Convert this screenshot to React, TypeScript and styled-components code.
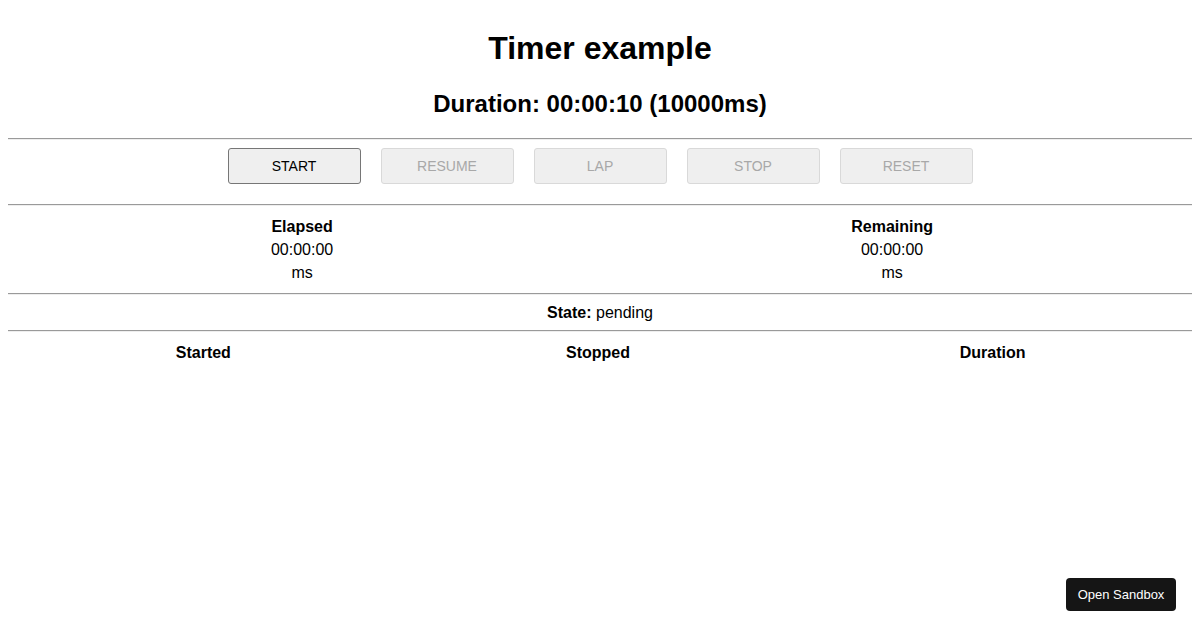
import React from "react";
import styled, { createGlobalStyle } from "styled-components";

const Global = createGlobalStyle`
  body {
    margin: 8px;
    font-family: "Liberation Sans", Arial, sans-serif;
    color: #000;
    background: #fff;
  }
`;

const Title = styled.h1`
  font-size: 32px;
  font-weight: bold;
  text-align: center;
  margin: 22px 0;
`;

const Subtitle = styled.h2`
  font-size: 24px;
  font-weight: bold;
  text-align: center;
  margin: 23px 0 20px;
`;

const Rule = styled.hr`
  margin: 0;
  border: none;
  border-top: 1px solid #9a9a9a;
  border-bottom: 1px solid #eeeeee;
  height: 0;
`;

const Controls = styled.div`
  display: flex;
  justify-content: center;
  gap: 20px;
  padding: 8px 0 20px;
`;

const Button = styled.button<{ $disabled?: boolean }>`
  width: 133px;
  height: 36px;
  font-family: "Liberation Sans", Arial, sans-serif;
  font-size: 14px;
  border-radius: 3px;
  background: #efefef;
  border: 1px solid ${(p) => (p.$disabled ? "#d9d9d9" : "#767676")};
  color: ${(p) => (p.$disabled ? "#a8a8a8" : "#000")};
  padding: 0;
`;

const Stats = styled.div`
  display: flex;
  justify-content: space-around;
  padding: 9px 0 9px 4px;
`;

const Stat = styled.div`
  text-align: center;
  font-size: 16px;
  line-height: 23px;
`;

const Label = styled.div`
  font-weight: bold;
`;

const StateLine = styled.div`
  text-align: center;
  font-size: 16px;
  line-height: 23px;
  padding: 6px 0 6px;
`;

const LapTable = styled.table`
  width: 100%;
  table-layout: fixed;
  border-collapse: collapse;
  margin-top: 11px;
  th {
    font-size: 16px;
    font-weight: bold;
    text-align: center;
    padding: 1px 4px 1px 0;
  }
`;

const SandboxLink = styled.a`
  position: fixed;
  right: 24px;
  bottom: 19px;
  width: 110px;
  height: 33px;
  display: flex;
  align-items: center;
  justify-content: center;
  background: #151515;
  color: #fff;
  border-radius: 4px;
  font-family: "Liberation Sans", Arial, sans-serif;
  font-size: 13px;
  text-decoration: none;
`;

export default function App() {
  return (
    <>
      <Global />
      <Title>Timer example</Title>
      <Subtitle>Duration: 00:00:10 (10000ms)</Subtitle>
      <Rule />
      <Controls>
        <Button>START</Button>
        <Button $disabled disabled>RESUME</Button>
        <Button $disabled disabled>LAP</Button>
        <Button $disabled disabled>STOP</Button>
        <Button $disabled disabled>RESET</Button>
      </Controls>
      <Rule />
      <Stats>
        <Stat>
          <Label>Elapsed</Label>
          <div>00:00:00</div>
          <div>ms</div>
        </Stat>
        <Stat>
          <Label>Remaining</Label>
          <div>00:00:00</div>
          <div>ms</div>
        </Stat>
      </Stats>
      <Rule />
      <StateLine>
        <b>State:</b> pending
      </StateLine>
      <Rule />
      <LapTable>
        <thead>
          <tr>
            <th>Started</th>
            <th>Stopped</th>
            <th>Duration</th>
          </tr>
        </thead>
      </LapTable>
      <SandboxLink href="#">Open Sandbox</SandboxLink>
    </>
  );
}
